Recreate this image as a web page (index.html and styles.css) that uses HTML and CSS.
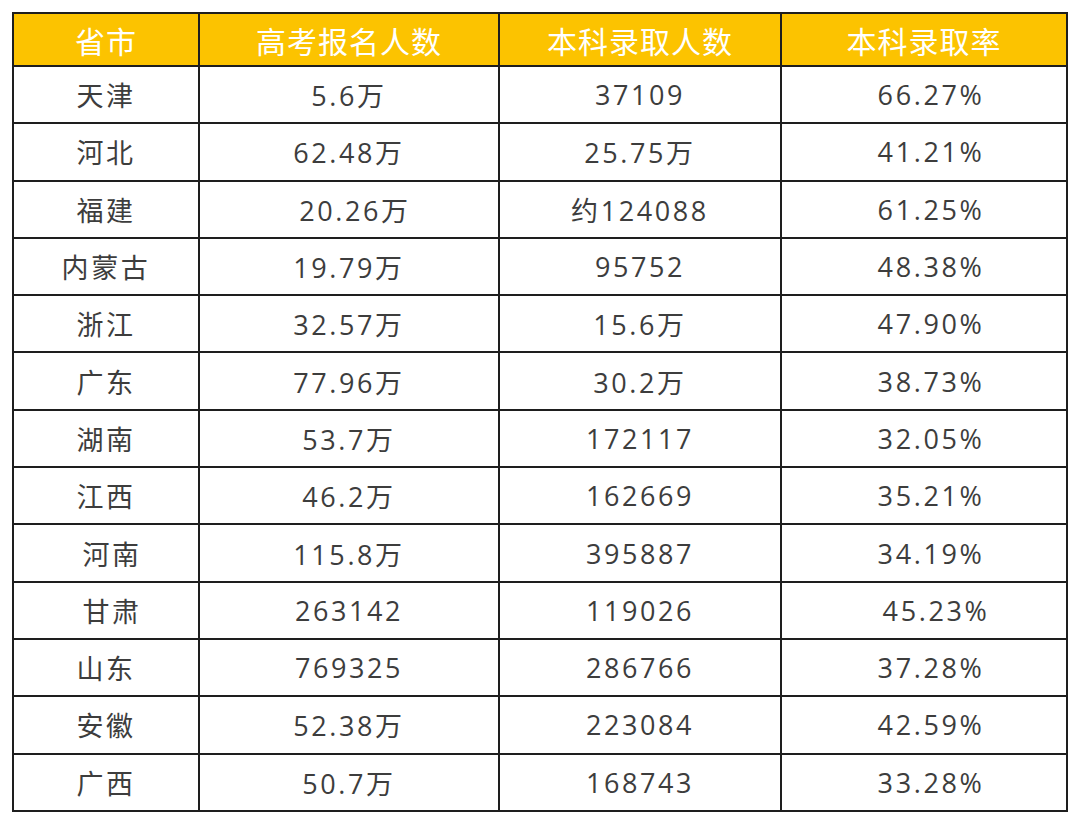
FILE: index.html
```html
<!DOCTYPE html>
<html lang="zh">
<head>
<meta charset="utf-8">
<link rel="stylesheet" href="styles.css">
</head>
<body>
<table class="admit">
  <thead>
    <tr class="head-row">
      <th class="c1">省市</th>
      <th class="c2">高考报名人数</th>
      <th class="c3">本科录取人数</th>
      <th class="c4">本科录取率</th>
    </tr>
  </thead>
  <tbody>
    <tr><td>天津</td><td>5.6万</td><td>37109</td><td class="rate">66.27%</td></tr>
    <tr><td>河北</td><td>62.48万</td><td>25.75万</td><td class="rate">41.21%</td></tr>
    <tr><td>福建</td><td class="nudge-r">20.26万</td><td>约124088</td><td class="rate">61.25%</td></tr>
    <tr><td>内蒙古</td><td>19.79万</td><td>95752</td><td class="rate">48.38%</td></tr>
    <tr><td>浙江</td><td>32.57万</td><td>15.6万</td><td class="rate">47.90%</td></tr>
    <tr><td>广东</td><td>77.96万</td><td>30.2万</td><td class="rate">38.73%</td></tr>
    <tr><td>湖南</td><td>53.7万</td><td>172117</td><td class="rate">32.05%</td></tr>
    <tr><td>江西</td><td>46.2万</td><td>162669</td><td class="rate">35.21%</td></tr>
    <tr><td class="nudge-r">河南</td><td>115.8万</td><td>395887</td><td class="rate">34.19%</td></tr>
    <tr><td class="nudge-r">甘肃</td><td>263142</td><td>119026</td><td class="rate nudge-r">45.23%</td></tr>
    <tr><td>山东</td><td>769325</td><td>286766</td><td class="rate">37.28%</td></tr>
    <tr><td>安徽</td><td>52.38万</td><td>223084</td><td class="rate">42.59%</td></tr>
    <tr><td>广西</td><td>50.7万</td><td>168743</td><td class="rate">33.28%</td></tr>
  </tbody>
</table>
</body>
</html>
```
FILE: styles.css
```css
html, body {
  margin: 0;
  padding: 0;
  background: #ffffff;
}
body {
  padding: 12px 0 0 12px;
}
.admit {
  border-collapse: collapse;
  table-layout: fixed;
  font-family: "Open Sans", "Noto Sans CJK SC", sans-serif;
  color: #3d3d3d;
}
.admit th, .admit td {
  border: 2px solid #1e1e1e;
  text-align: center;
  padding: 0;
  white-space: nowrap;
}
.c1 { width: 184px; }
.c2 { width: 298px; }
.c3 { width: 280px; }
.c4 { width: 284px; }
.head-row {
  height: 53px;
  background: #fcc300;
}
.admit th {
  color: #ffffff;
  font-weight: 400;
  font-size: 30px;
  letter-spacing: 1px;
  font-family: "Noto Sans CJK SC", sans-serif;
}
.admit tbody tr {
  height: 57.3px;
}
.admit td {
  font-size: 27px;
  letter-spacing: 2.6px;
}
.admit td.rate {
  padding-left: 14px;
}
.admit td.nudge-r {
  padding-left: 12px;
}
.admit td.rate.nudge-r {
  padding-left: 24px;
}
```
